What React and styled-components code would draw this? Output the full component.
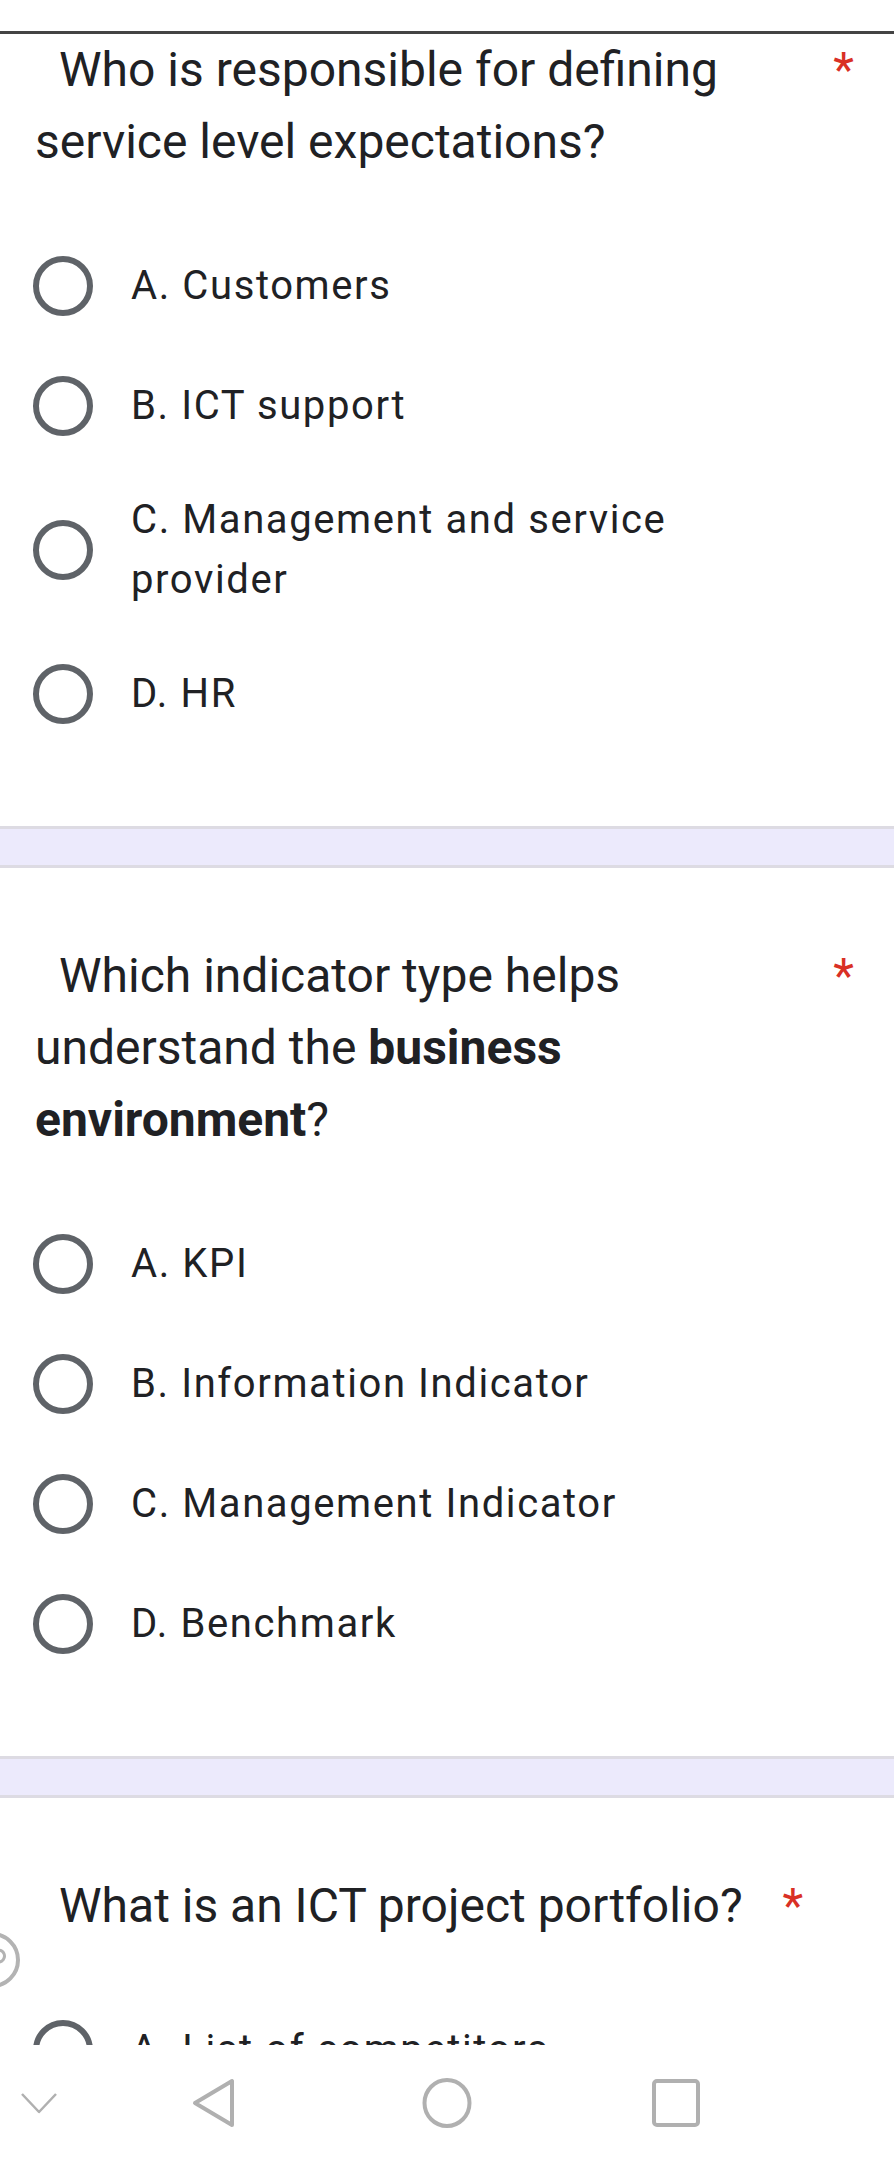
import styled, { createGlobalStyle } from "styled-components"

const GlobalStyle = createGlobalStyle`
  body {
    margin: 0;
    background: #fff;
    font-family: Roboto, "Liberation Sans", sans-serif;
    color: #202124;
  }
`

// 整個手機畫面
const Screen = styled.div`
  width: 894px;
  height: 2160px;
  display: flex;
  flex-direction: column;
  overflow: hidden;
  background: #fff;
`

// 可捲動的內容區
const Content = styled.div`
  flex: 1;
  position: relative;
  overflow: hidden;
`

const TopRule = styled.div`
  height: 3px;
  margin-top: 31px;
  background: #444;
`

const Card = styled.section`
  padding: ${props => props.$top}px 0 72px;
`

const Separator = styled.div`
  height: 36px;
  background: #eceafc;
  border-top: 3px solid #dddbe3;
  border-bottom: 3px solid #dddbe3;
`

const TitleRow = styled.div`
  display: flex;
  align-items: flex-start;
  padding: 0 40px 0 35px;
`

const TitleText = styled.div`
  flex: 0 1 auto;
  font-size: 48px;
  line-height: 72px;
  text-indent: 24px;
  color: #202124;

  b {
    font-weight: 700;
  }
`

const Required = styled.span`
  flex: none;
  margin-left: 40px;
  color: #d93025;
  font-size: 48px;
  line-height: 72px;
`

const Options = styled.div`
  margin-top: 48px;
`

const OptionRow = styled.label`
  display: flex;
  align-items: center;
  min-height: 72px;
  padding: 24px 80px 24px 33px;
`

const Radio = styled.span`
  flex: none;
  width: 60px;
  height: 60px;
  box-sizing: border-box;
  border: 6px solid #5f6368;
  border-radius: 50%;
`

const OptionText = styled.span`
  margin-left: 38px;
  font-size: 40px;
  line-height: 60px;
  letter-spacing: 1.6px;
  color: #202124;
`

// 左邊浮動的半圓按鈕
const EdgeBubble = styled.div`
  position: absolute;
  left: -36px;
  top: 1932px;
  width: 56px;
  height: 56px;
`

// 底部導航列
const NavBar = styled.nav`
  flex: none;
  height: 115px;
  display: flex;
  align-items: center;
  background: #fff;
`

const NavButton = styled.div`
  display: flex;
  margin-left: ${props => props.$left}px;
`

const Question = ({ title, options, top }) => (
  <Card $top={top}>
    <TitleRow>
      <TitleText>{title}</TitleText>
      <Required>*</Required>
    </TitleRow>
    <Options>
      {options.map(text => (
        <OptionRow key={text}>
          <Radio />
          <OptionText>{text}</OptionText>
        </OptionRow>
      ))}
    </Options>
  </Card>
)

const App = () => {
  return (
    <Screen>
      <GlobalStyle />
      <Content>
        <TopRule />
        <Question
          top={0}
          title="Who is responsible for defining service level expectations?"
          options={[
            "A. Customers",
            "B. ICT support",
            "C. Management and service provider",
            "D. HR",
          ]}
        />
        <Separator />
        <Question
          top={72}
          title={<>Which indicator type helps understand the <b>business environment</b>?</>}
          options={[
            "A. KPI",
            "B. Information Indicator",
            "C. Management Indicator",
            "D. Benchmark",
          ]}
        />
        <Separator />
        <Question
          top={72}
          title="What is an ICT project portfolio?"
          options={["A. List of competitors"]}
        />
        <EdgeBubble>
          <svg width="56" height="56" viewBox="0 0 56 56">
            <circle cx="28" cy="28" r="26" fill="#fff" stroke="#b3b3b3" strokeWidth="4" />
            <path d="M30 20 a6 6 0 1 1 4 10" fill="none" stroke="#b3b3b3" strokeWidth="3" />
          </svg>
        </EdgeBubble>
      </Content>
      <NavBar>
        <NavButton $left={20}>
          <svg width="38" height="22" viewBox="0 0 38 22">
            <path d="M2 2 L19 20 L36 2" fill="none" stroke="#b0b0b0" strokeWidth="2.5" strokeLinejoin="round" />
          </svg>
        </NavButton>
        <NavButton $left={133}>
          <svg width="46" height="52" viewBox="0 0 46 52">
            <path d="M41 4 L41 48 L4 26 Z" fill="none" stroke="#b0b0b0" strokeWidth="4" strokeLinejoin="round" />
          </svg>
        </NavButton>
        <NavButton $left={184}>
          <svg width="52" height="52" viewBox="0 0 52 52">
            <ellipse cx="26" cy="26" rx="22.5" ry="23" fill="none" stroke="#b0b0b0" strokeWidth="4" />
          </svg>
        </NavButton>
        <NavButton $left={179}>
          <svg width="48" height="48" viewBox="0 0 48 48">
            <rect x="2" y="2" width="44" height="44" rx="3" fill="none" stroke="#b0b0b0" strokeWidth="4" />
          </svg>
        </NavButton>
      </NavBar>
    </Screen>
  )
}

export default App
